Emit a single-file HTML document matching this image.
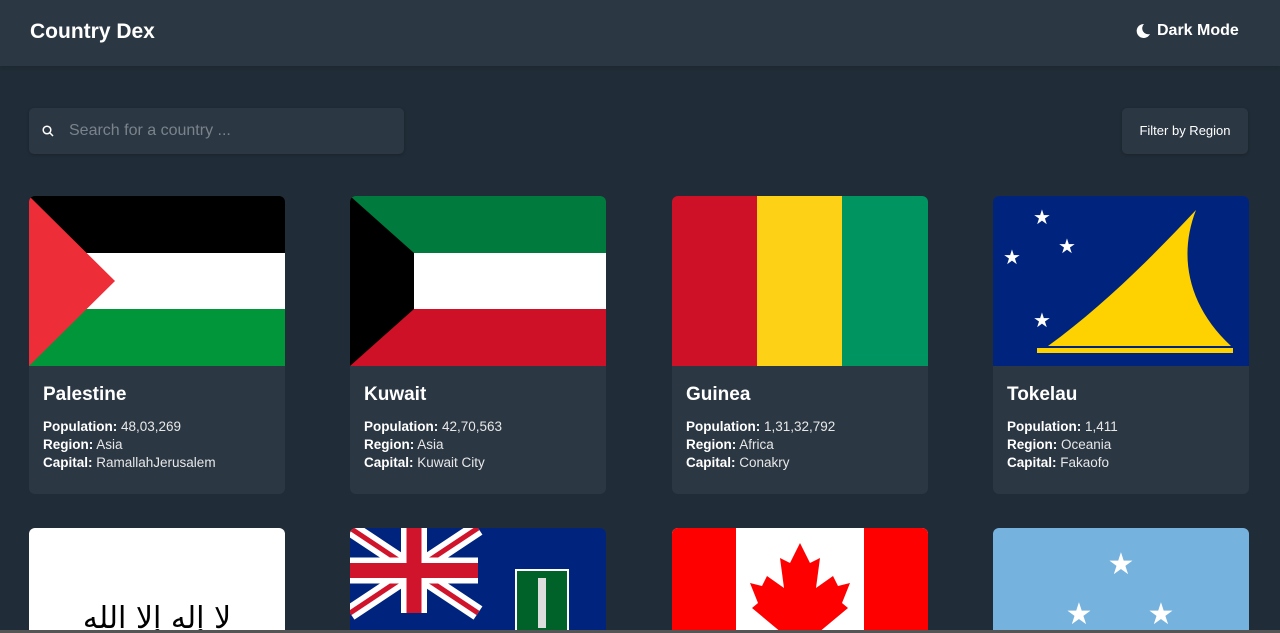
<!DOCTYPE html>
<html><head><meta charset="utf-8"><style>
*{margin:0;padding:0;box-sizing:border-box}
html,body{width:1280px;height:633px;overflow:hidden;background:#202c37;font-family:"Liberation Sans",sans-serif;color:#fff;position:relative}
.hdr{height:66px;background:#2b3743;position:relative;box-shadow:0 2px 4px rgba(0,0,0,.1)}
.hdr h1{position:absolute;left:30px;top:20px;font-size:21px;font-weight:700}
.dm{position:absolute;left:1135px;top:22px;font-size:16px;font-weight:700;display:flex;align-items:center;gap:6px}
.search{position:absolute;left:29px;top:108px;width:375px;height:46px;background:#2b3743;border-radius:5px;box-shadow:0 1px 3px rgba(0,0,0,.2)}
.search span{position:absolute;left:40px;top:14px;font-size:16px;color:#7a838c}
.search svg{position:absolute;left:13px;top:17px}
.filter{position:absolute;left:1122px;top:108px;width:126px;height:46px;background:#2b3743;border-radius:5px;font-size:13px;line-height:46px;text-align:center;box-shadow:0 1px 3px rgba(0,0,0,.2)}
.card{position:absolute;width:256px;height:298px;background:#2b3743;border-radius:6px;overflow:hidden}
.card.r2{height:102px;border-radius:6px 6px 0 0}
.card svg.f{display:block;width:256px;height:170px}
.card h2{position:absolute;left:14px;top:188px;font-size:19px;font-weight:700}
.card p{position:absolute;left:14px;font-size:13.5px;color:#e8e8e8}
.card p b{color:#fff}
.bar{position:absolute;left:0;top:630px;width:1280px;height:3px;background:#555}
</style></head><body>
<div class="hdr"><h1>Country Dex</h1>
<div class="dm"><svg width="16" height="16" viewBox="0 0 16 16"><path d="M9 1A7 7 0 1 0 15 11 6 6 0 0 1 9 1Z" fill="#fff"/></svg>Dark Mode</div></div>
<div class="search"><svg width="12" height="12" viewBox="0 0 12 12"><circle cx="5" cy="5" r="3.8" fill="none" stroke="#fff" stroke-width="1.5"/><path d="M8 8l3 3" stroke="#fff" stroke-width="1.5"/></svg><span>Search for a country ...</span></div>
<div class="filter">Filter by Region</div>

<div class="card" style="left:29px;top:196px"><svg class="f" viewBox="0 0 256 170"><rect width="256" height="57" fill="#000"/><rect y="57" width="256" height="56" fill="#fff"/><rect y="113" width="256" height="57" fill="#009639"/><path d="M0 0L86 85 0 170Z" fill="#ed2e38"/></svg>
<h2>Palestine</h2><p style="top:223px"><b>Population:</b> 48,03,269</p><p style="top:241px"><b>Region:</b> Asia</p><p style="top:259px"><b>Capital:</b> RamallahJerusalem</p></div>

<div class="card" style="left:350px;top:196px"><svg class="f" viewBox="0 0 256 170"><rect width="256" height="57" fill="#007a3d"/><rect y="57" width="256" height="56" fill="#fff"/><rect y="113" width="256" height="57" fill="#ce1126"/><path d="M0 0L64 57 64 113 0 170Z" fill="#000"/></svg>
<h2>Kuwait</h2><p style="top:223px"><b>Population:</b> 42,70,563</p><p style="top:241px"><b>Region:</b> Asia</p><p style="top:259px"><b>Capital:</b> Kuwait City</p></div>

<div class="card" style="left:672px;top:196px"><svg class="f" viewBox="0 0 256 170"><rect width="86" height="170" fill="#ce1126"/><rect x="85" width="86" height="170" fill="#fcd116"/><rect x="170" width="86" height="170" fill="#009460"/></svg>
<h2>Guinea</h2><p style="top:223px"><b>Population:</b> 1,31,32,792</p><p style="top:241px"><b>Region:</b> Africa</p><p style="top:259px"><b>Capital:</b> Conakry</p></div>

<div class="card" style="left:993px;top:196px"><svg class="f" viewBox="0 0 256 170"><rect width="256" height="170" fill="#00247d"/><path d="M55 150C110 110 160 60 203 14 185 60 195 110 238 150Z" fill="#fed100"/><rect x="44" y="152" width="196" height="5" fill="#fed100"/><g fill="#fff" font-size="20" font-family="DejaVu Sans"><text x="40" y="28">★</text><text x="65" y="57">★</text><text x="10" y="68">★</text><text x="40" y="131">★</text></g></svg>
<h2>Tokelau</h2><p style="top:223px"><b>Population:</b> 1,411</p><p style="top:241px"><b>Region:</b> Oceania</p><p style="top:259px"><b>Capital:</b> Fakaofo</p></div>

<div class="card r2" style="left:29px;top:528px"><svg class="f" viewBox="0 0 256 170"><rect width="256" height="170" fill="#fff"/><text x="128" y="100" text-anchor="middle" font-size="30" font-family="DejaVu Sans" fill="#000">لا إله إلا الله</text></svg></div>

<div class="card r2" style="left:350px;top:528px"><svg class="f" viewBox="0 0 256 170"><rect width="256" height="170" fill="#00247d"/><g><path d="M0 0L128 85M128 0L0 85" stroke="#fff" stroke-width="16"/><path d="M0 0L128 85M128 0L0 85" stroke="#cf142b" stroke-width="5"/><path d="M64 0V85M0 42.5H128" stroke="#fff" stroke-width="26"/><path d="M64 0V85M0 42.5H128" stroke="#cf142b" stroke-width="15"/></g><rect x="166" y="42" width="52" height="62" fill="#006129" stroke="#fff" stroke-width="2"/><rect x="188" y="50" width="8" height="50" fill="#ddd"/></svg></div>

<div class="card r2" style="left:672px;top:528px"><svg class="f" viewBox="0 0 256 170"><rect width="256" height="170" fill="#fff"/><rect width="64" height="170" fill="#f00"/><rect x="192" width="64" height="170" fill="#f00"/><path d="M128 15L118 35 108 30 112 60 95 48 90 58 78 55 86 75 80 80 110 105 125 105 125 130 131 130 131 105 146 105 176 80 170 75 178 55 166 58 161 48 144 60 148 30 138 35Z" fill="#f00"/></svg></div>

<div class="card r2" style="left:993px;top:528px"><svg class="f" viewBox="0 0 256 170"><rect width="256" height="170" fill="#75b2dd"/><g fill="#fff" font-size="30" font-family="DejaVu Sans" text-anchor="middle"><text x="128" y="46">★</text><text x="86" y="96">★</text><text x="168" y="96">★</text></g></svg></div>
<div class="bar"></div>
</body></html>
